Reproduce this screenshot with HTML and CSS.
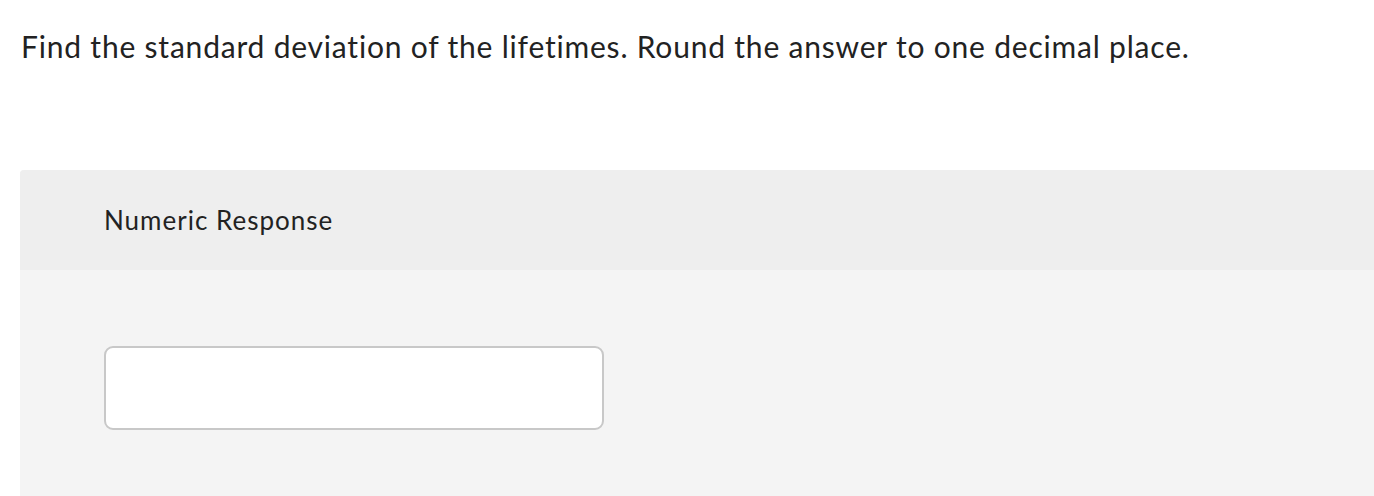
FILE: index.html
```html
<!DOCTYPE html>
<html>
<head>
<meta charset="utf-8">
<link rel="stylesheet" href="styles.css">
</head>
<body>
<p class="prompt">Find the standard deviation of the lifetimes. Round the answer to one decimal place.</p>
<section class="panel">
  <div class="panel-head">Numeric Response</div>
  <div class="panel-body">
    <input class="answer" type="text" aria-label="Numeric response">
  </div>
</section>
</body>
</html>
```
FILE: styles.css
```css
html, body {
  margin: 0;
  padding: 0;
  background: #ffffff;
}
body {
  font-family: Lato, "Open Sans", sans-serif;
  color: #222222;
  padding: 0 0 0 20px;
}
.prompt {
  margin: 0;
  padding: 27px 0 0 1px;
  height: 170px;
  box-sizing: border-box;
  font-size: 30px;
  line-height: 38px;
  letter-spacing: 0.8px;
}
.panel {
  background: #f4f4f4;
  border-top-left-radius: 4px;
  overflow: hidden;
}
.panel-head {
  background: #eeeeee;
  height: 100px;
  display: flex;
  align-items: center;
  padding-left: 84px;
  font-size: 26px;
  letter-spacing: 1px;
}
.panel-body {
  padding: 76px 0 80px 84px;
}
.answer {
  display: block;
  width: 500px;
  height: 84px;
  box-sizing: border-box;
  border: 2px solid #c8c8c8;
  border-radius: 9px;
  background: #ffffff;
  margin: 0;
  padding: 0 12px;
  font: inherit;
  outline: none;
}
```
